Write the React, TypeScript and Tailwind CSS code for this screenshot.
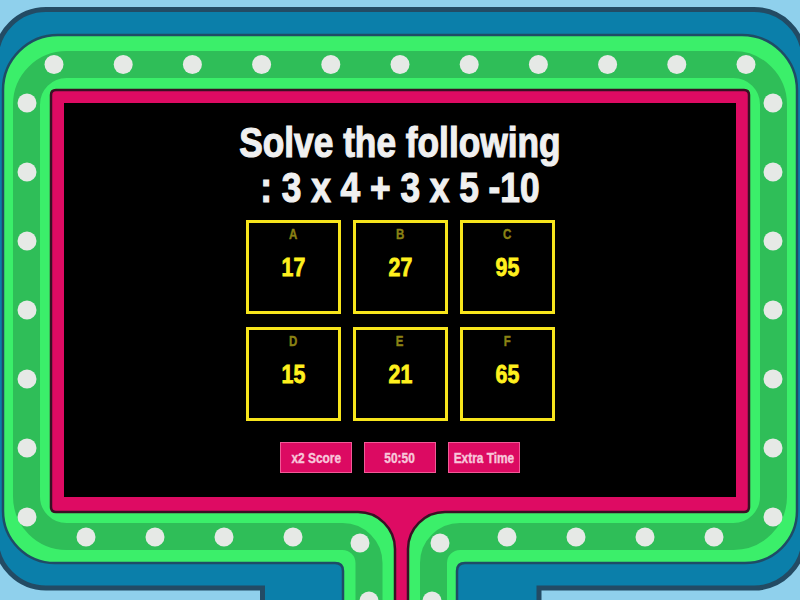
import React from 'react'

const answers = [
  { letter: 'A', value: '17' },
  { letter: 'B', value: '27' },
  { letter: 'C', value: '95' },
  { letter: 'D', value: '15' },
  { letter: 'E', value: '21' },
  { letter: 'F', value: '65' },
]

const powerUps = ['x2 Score', '50:50', 'Extra Time']

const sideYs = [103, 172, 241, 310, 379, 448, 517]
const dots: [number, number][] = [
  ...Array.from({ length: 11 }, (_, i) => [54 + i * 69.2, 64.5] as [number, number]),
  ...sideYs.map(y => [27, y] as [number, number]),
  ...sideYs.map(y => [773, y] as [number, number]),
  [86, 537], [155, 537], [224, 537], [293, 537], [360, 543], [369, 601],
  [440, 543], [507, 537], [576, 537], [645, 537], [714, 537], [432, 601],
]

function Frame() {
  return (
    <svg className="absolute inset-0" width="800" height="600" viewBox="0 0 800 600">
      {/* outer blue rim */}
      <path
        d="M -4 59 A 50 50 0 0 1 46 9.5 H 754 A 50 50 0 0 1 804 59 V 538 A 50 50 0 0 1 754 588 H 539 V 620 H 262.5 V 588 H 46 A 50 50 0 0 1 -4 538 Z"
        fill="#0b7faa"
        stroke="#234b64"
        strokeWidth="5"
      />
      {/* light green band */}
      <path
        d="M 343 620 V 571 Q 343 563 335 563 H 55 A 52 52 0 0 1 3 511 V 90 A 55 55 0 0 1 58 35 H 742 A 55 55 0 0 1 797 90 V 511 A 52 52 0 0 1 745 563 H 465 Q 457 563 457 571 V 620 Z"
        fill="#3bef6a"
        stroke="#1f4c66"
        strokeWidth="2.5"
      />
      {/* dark green track */}
      <path
        d="M 369 620 V 563 A 26.5 26.5 0 0 0 342.5 536.5 H 66.5 A 40 40 0 0 1 26.5 496.5 V 104.5 A 40 40 0 0 1 66.5 64.5 H 733.5 A 40 40 0 0 1 773.5 104.5 V 496.5 A 40 40 0 0 1 733.5 536.5 H 460 A 26.5 26.5 0 0 0 433.5 563 V 620"
        fill="none"
        stroke="#2fbe58"
        strokeWidth="27"
      />
      {/* pink screen bezel + stand */}
      <path
        d="M 56 90 H 744 Q 749 90 749 95 V 507 Q 749 512 744 512 H 445 A 37 37 0 0 0 408 549 V 620 H 395 V 549 A 37 37 0 0 0 358 512 H 56 Q 51 512 51 507 V 95 Q 51 90 56 90 Z"
        fill="#de0b63"
        stroke="#3a1024"
        strokeWidth="2.5"
      />
      {dots.map(([x, y], i) => (
        <circle key={i} cx={x} cy={y} r="9.5" fill="#e6e9e6" />
      ))}
    </svg>
  )
}

export default function App() {
  return (
    <div className="relative w-[800px] h-[600px] overflow-hidden bg-[#8fd0ec] font-['Liberation_Sans',Arial,sans-serif]">
      <Frame />
      <div className="relative ml-[64px] pt-[103px]">
        <div className="w-[672px] h-[394px] bg-black flex flex-col items-center pt-[17px]">
          <h1 className="text-[43px] leading-[45px] font-bold text-[#f0f0f0] text-center whitespace-nowrap scale-x-[0.82] [-webkit-text-stroke:1.2px_#f0f0f0]">
            Solve the following
            <br />
            : 3 x 4 + 3 x 5 -10
          </h1>

          <div className="mt-[10px] grid grid-cols-[repeat(3,95px)] gap-x-[12px] gap-y-[13px]">
            {answers.map(a => (
              <div key={a.letter} className="h-[94px] border-[3px] border-[#f7e51c] flex flex-col items-center pt-[3px]">
                <span className="text-[14px] leading-[16px] font-bold text-[#8a8214] scale-x-[0.82] [-webkit-text-stroke:0.4px_#8a8214]">{a.letter}</span>
                <span className="mt-[10px] text-[26px] leading-[30px] font-bold text-[#fff01e] scale-x-[0.82] [-webkit-text-stroke:0.8px_#fff01e]">{a.value}</span>
              </div>
            ))}
          </div>

          <div className="mt-[21px] flex gap-[12px]">
            {powerUps.map(p => (
              <button key={p} className="w-[72px] h-[31px] bg-[#dc0a62] border border-[#f15a97] flex items-center justify-center pt-[2px]">
                <span className="text-[14.5px] font-bold text-[#f8c6da] whitespace-nowrap scale-x-[0.82] [-webkit-text-stroke:0.4px_#f8c6da]">{p}</span>
              </button>
            ))}
          </div>
        </div>
      </div>
    </div>
  )
}
